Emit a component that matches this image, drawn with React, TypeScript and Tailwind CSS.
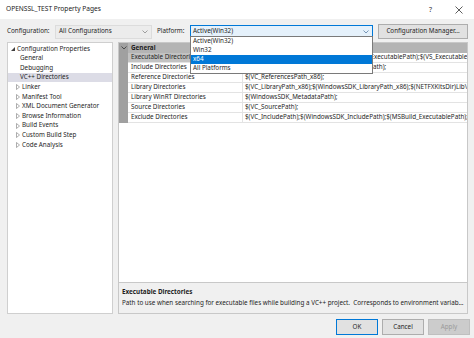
import React from "react";

const treeChildren = [
  "Linker",
  "Manifest Tool",
  "XML Document Generator",
  "Browse Information",
  "Build Events",
  "Custom Build Step",
  "Code Analysis",
];

const rows = [
  {
    name: "Executable Directories",
    value:
      "$(VC_ExecutablePath_x86);$(WindowsSDK_ExecutablePath);$(VS_ExecutablePath);$(MSBuild_ExecutablePath);$(FxCopDir);$(PATH);",
  },
  { name: "Include Directories", value: "$(VC_IncludePath);$(WindowsSDK_IncludePath);" },
  { name: "Reference Directories", value: "$(VC_ReferencesPath_x86);" },
  {
    name: "Library Directories",
    value: "$(VC_LibraryPath_x86);$(WindowsSDK_LibraryPath_x86);$(NETFXKitsDir)Lib\\um\\x86",
  },
  { name: "Library WinRT Directories", value: "$(WindowsSDK_MetadataPath);" },
  { name: "Source Directories", value: "$(VC_SourcePath);" },
  {
    name: "Exclude Directories",
    value:
      "$(VC_IncludePath);$(WindowsSDK_IncludePath);$(MSBuild_ExecutablePath);$(VC_LibraryPath_x86);",
  },
];

const platforms = ["Active(Win32)", "Win32", "x64", "All Platforms"];

const Chevron = ({ color = "#606060" }: { color?: string }) => (
  <svg width="6" height="4" viewBox="0 0 6 4">
    <path d="M0.5 0.5 L3 3 L5.5 0.5" fill="none" stroke={color} strokeWidth="0.8" />
  </svg>
);

const Collapsed = () => (
  <svg width="4" height="6" viewBox="0 0 4 6" className="shrink-0">
    <path d="M0.5 0.5 L3.5 3 L0.5 5.5 Z" fill="none" stroke="#8a8a8a" strokeWidth="0.7" />
  </svg>
);

const Expanded = () => (
  <svg width="4" height="4" viewBox="0 0 4 4" className="shrink-0">
    <path d="M4 0 L4 4 L0 4 Z" fill="#404040" />
  </svg>
);

const App = () => {
  return (
    <div
      className="relative w-[474px] h-[338px] bg-[#f0f0f0] text-[#1e1e1e] overflow-hidden text-[6.3px] leading-none"
      style={{ fontFamily: '"Noto Sans", "Open Sans", sans-serif' }}
    >
      {/* title bar */}
      <div className="flex items-center h-[19px] bg-white pl-[6px]">
        <span className="text-[6.6px] text-[#222]">OPENSSL_TEST Property Pages</span>
        <span className="ml-auto mr-[23px] text-[7px] text-[#333]">?</span>
        <svg width="8" height="8" viewBox="0 0 8 8" className="mr-[11px]">
          <path d="M0.5 0.5 L7.5 7.5 M7.5 0.5 L0.5 7.5" stroke="#333" strokeWidth="0.8" />
        </svg>
      </div>

      {/* configuration row */}
      <div className="flex items-center h-[23px] pt-[2px] pl-[7px] pr-[6px]">
        <span className="w-[48px]">Configuration:</span>
        <div className="flex items-center w-[97px] h-[14px] bg-[#ececec] border border-[#dcdcdc] pl-[3px] pr-[3px]">
          <span>All Configurations</span>
          <span className="ml-auto">
            <Chevron color="#8a8a8a" />
          </span>
        </div>
        <span className="ml-[5px] w-[33px]">Platform:</span>
        <div className="flex items-center w-[183px] h-[14px] bg-[#e5f1fb] border border-[#0078d7] pl-[2px] pr-[3px]">
          <span>Active(Win32)</span>
          <span className="ml-auto">
            <Chevron color="#5a7fa6" />
          </span>
        </div>
        <div className="ml-auto flex items-center justify-center w-[90px] h-[15px] bg-[#e1e1e1] border border-[#adadad]">
          Configuration Manager...
        </div>
      </div>

      {/* main area */}
      <div className="flex h-[272px] pl-[7px] pr-[6px] gap-[5px]">
        {/* tree */}
        <div className="w-[106px] bg-white border border-[#cfcfcf] pt-[1px]">
          <div className="flex items-center h-[9.6px] pl-[3px] gap-[2px]">
            <Expanded />
            <span>Configuration Properties</span>
          </div>
          <div className="flex items-center h-[9.6px] pl-[12px]">General</div>
          <div className="flex items-center h-[9.6px] pl-[12px]">Debugging</div>
          <div className="flex items-center h-[9.6px] pl-[12px] bg-[#dcdce6]">VC++ Directories</div>
          {treeChildren.map((t) => (
            <div key={t} className="flex items-center h-[9.6px] pl-[8px] gap-[2px]">
              <Collapsed />
              <span>{t}</span>
            </div>
          ))}
        </div>

        {/* property grid */}
        <div className="flex-1 flex flex-col min-w-0">
          <div className="flex-1 bg-white border border-[#c8c8c8] overflow-hidden">
            <div className="flex h-[10px] bg-[#b4b4b4]">
              <div className="w-[9px] flex items-center justify-center bg-[#a0a0a0]">
                <Chevron color="#333" />
              </div>
              <div className="flex items-center pl-[3px] font-bold">General</div>
            </div>
            {rows.map((r, i) => (
              <div key={r.name} className="flex h-[10px]">
                <div className="w-[9px] bg-[#a0a0a0]" />
                <div
                  className={`w-[115px] shrink-0 flex items-center pl-[3px] border-b border-r border-[#e3e3e3] ${
                    i === 0 ? "bg-[#c2c2c2]" : ""
                  }`}
                >
                  {r.name}
                </div>
                <div className="flex-1 min-w-0 flex items-center pl-[2px] border-b border-[#e3e3e3] whitespace-nowrap overflow-hidden">
                  {r.value}
                </div>
              </div>
            ))}
          </div>
          <div className="h-[31px] border border-t-0 border-[#c8c8c8] bg-[#f0f0f0] px-[3px] pt-[6px]">
            <div className="font-bold">Executable Directories</div>
            <div className="mt-[5px] whitespace-nowrap overflow-hidden text-ellipsis">
              Path to use when searching for executable files while building a VC++ project.&nbsp;&nbsp;Corresponds to environment variable PATH.
            </div>
          </div>
        </div>
      </div>

      {/* buttons */}
      <div className="flex justify-end gap-[4px] pr-[4px] pt-[5px]">
        <div className="flex items-center justify-center w-[42px] h-[16px] bg-[#e1e1e1] border border-[#0078d7]">OK</div>
        <div className="flex items-center justify-center w-[42px] h-[16px] bg-[#e1e1e1] border border-[#adadad]">Cancel</div>
        <div className="flex items-center justify-center w-[42px] h-[16px] bg-[#cccccc] border border-[#bfbfbf] text-[#9a9a9a]">Apply</div>
      </div>

      {/* platform dropdown */}
      <div className="absolute left-[190px] top-[36px] w-[183px] bg-white border border-[#7a7a7a]">
        {platforms.map((p) => (
          <div
            key={p}
            className={`flex items-center h-[9px] pl-[2px] ${p === "x64" ? "bg-[#0078d7] text-white" : ""}`}
          >
            {p}
          </div>
        ))}
      </div>
    </div>
  );
};

export default App;
